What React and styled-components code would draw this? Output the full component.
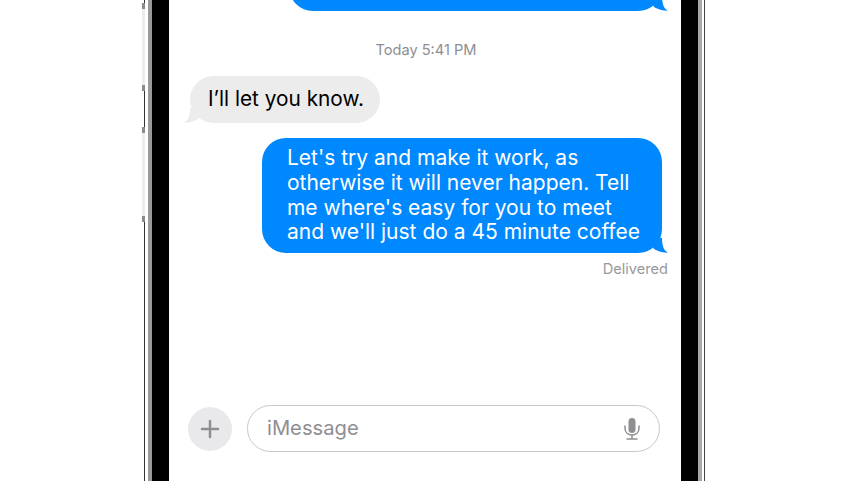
import React from 'react';
import styled, { createGlobalStyle } from 'styled-components';

const GlobalStyle = createGlobalStyle`
  html, body {
    margin: 0;
    height: 100%;
    background: #fff;
    overflow: hidden;
    font-family: Inter, "Liberation Sans", sans-serif;
  }
`;

const Page = styled.div`
  height: 481px;
  padding-left: 144px;
  overflow: hidden;
`;

const Chassis = styled.div`
  position: relative;
  box-sizing: border-box;
  width: 561px;
  height: 481px;
  padding: 0 2px 0 3px;
  border-left: 1px solid #333;
  border-right: 1px solid #444;
  background: #fff;
`;

const SideButton = styled.div`
  position: absolute;
  left: -3px;
  top: ${p => p.$top}px;
  width: 3px;
  height: ${p => p.$height}px;
  background: #ececec;
  border-top: 6px solid #8c8c8c;
  border-bottom: 6px solid #8c8c8c;
`;

const Band = styled.div`
  height: 100%;
  border-left: 4px solid #9a9a9a;
  border-right: 4px solid #a8a8a8;
`;

const Bezel = styled.div`
  box-sizing: border-box;
  height: 100%;
  border-left: 17px solid #000;
  border-right: 17px solid #000;
`;

const Screen = styled.div`
  height: 100%;
  display: flex;
  flex-direction: column;
  background: #fff;
`;

const Thread = styled.div`
  flex: 1;
  min-height: 0;
  display: flex;
  flex-direction: column;
  justify-content: flex-end;
  padding: 0 19px 127px 21px;
  overflow: hidden;
`;

const Timestamp = styled.div`
  margin: 31px 0 17px;
  text-align: center;
  font-size: 14.6px;
  line-height: 17px;
  color: #8e8e93;
`;

const Bubble = styled.div`
  position: relative;
  flex-shrink: 0;
  box-sizing: border-box;
  align-self: ${p => (p.$sent ? 'flex-end' : 'flex-start')};
  padding: 8px 22px 8px 25px;
  border-radius: 24px;
  font-size: 21px;
  line-height: 24.7px;
  background: ${p => (p.$sent ? '#0088ff' : '#ececec')};
  color: ${p => (p.$sent ? '#fff' : '#000')};
`;

const Received = styled(Bubble)`
  padding: 11px 16px 11.3px 18px;
  margin-bottom: 15px;
  font-size: 20.8px;
`;

const Hidden = styled(Bubble)`
  height: 60px;
  width: 373px;
`;

const TailSvg = styled.svg`
  position: absolute;
  bottom: 0;
  width: 28px;
  height: 23px;
  ${p => (p.$sent ? 'right: -6px;' : 'left: -6px; transform: scaleX(-1);')}
`;

const Status = styled.div`
  align-self: flex-end;
  margin: 8px -6px 0 0;
  font-size: 14.6px;
  line-height: 17px;
  color: #98989c;
`;

const Composer = styled.div`
  display: flex;
  align-items: center;
  gap: 15px;
  padding: 0 21px 29px 19px;
`;

const AddButton = styled.button`
  flex-shrink: 0;
  display: flex;
  align-items: center;
  justify-content: center;
  width: 44px;
  height: 44px;
  padding: 0;
  border: 0;
  border-radius: 50%;
  background: #e9e9eb;
`;

const InputWrap = styled.div`
  flex: 1;
  display: flex;
  align-items: center;
  box-sizing: border-box;
  height: 47px;
  padding: 0 19px 0 19px;
  border: 1px solid #c8c8cc;
  border-radius: 24px;
`;

const MessageInput = styled.input`
  flex: 1;
  min-width: 0;
  padding: 0 0 2px;
  border: 0;
  outline: 0;
  background: transparent;
  font: inherit;
  font-size: 20.2px;
  &::placeholder {
    color: #8e8e93;
    opacity: 1;
  }
`;

const MicSvg = styled.svg`
  margin-top: 1px;
`;

const Tail = ({ sent }) => (
  <TailSvg $sent={sent} viewBox="0 0 28 23" aria-hidden="true">
    <path
      d="M13.5 18.6C16 20.6 22 23 28 22.6C24 21 22 16 22 8L10 8Z"
      fill={sent ? '#0088ff' : '#ececec'}
    />
  </TailSvg>
);

const PlusIcon = () => (
  <svg width="20" height="20" viewBox="0 0 20 20" aria-hidden="true">
    <path d="M10 2V18M2 10H18" stroke="#8e8e93" strokeWidth="2.5" strokeLinecap="round" />
  </svg>
);

const MicIcon = () => (
  <MicSvg width="16" height="22" viewBox="0 0 16 22" aria-hidden="true">
    <rect x="4.5" y="0" width="7" height="15" rx="3.5" fill="#8e8e93" />
    <path d="M1 8V10C1 14.5 4 17 8 17C12 17 15 14.5 15 10V8M8 17V20.8M3 20.9H13" fill="none" stroke="#8e8e93" strokeWidth="1.5" strokeLinecap="round" />
  </MicSvg>
);

const App = () => (
  <Page>
    <GlobalStyle />
    <Chassis>
      <SideButton $top={3} $height={76} />
      <SideButton $top={127} $height={83} />
      <Band>
        <Bezel>
          <Screen>
            <Thread>
              <Hidden $sent>
                <Tail sent />
              </Hidden>
              <Timestamp>Today 5:41 PM</Timestamp>
              <Received>
                I’ll let you know.
                <Tail />
              </Received>
              <Bubble $sent>
                Let's try and make it work, as<br />
                otherwise it will never happen. Tell<br />
                me where's easy for you to meet<br />
                and we'll just do a 45 minute coffee
                <Tail sent />
              </Bubble>
              <Status>Delivered</Status>
            </Thread>
            <Composer>
              <AddButton aria-label="Add">
                <PlusIcon />
              </AddButton>
              <InputWrap>
                <MessageInput placeholder="iMessage" />
                <MicIcon />
              </InputWrap>
            </Composer>
          </Screen>
        </Bezel>
      </Band>
    </Chassis>
  </Page>
);

export default App;
